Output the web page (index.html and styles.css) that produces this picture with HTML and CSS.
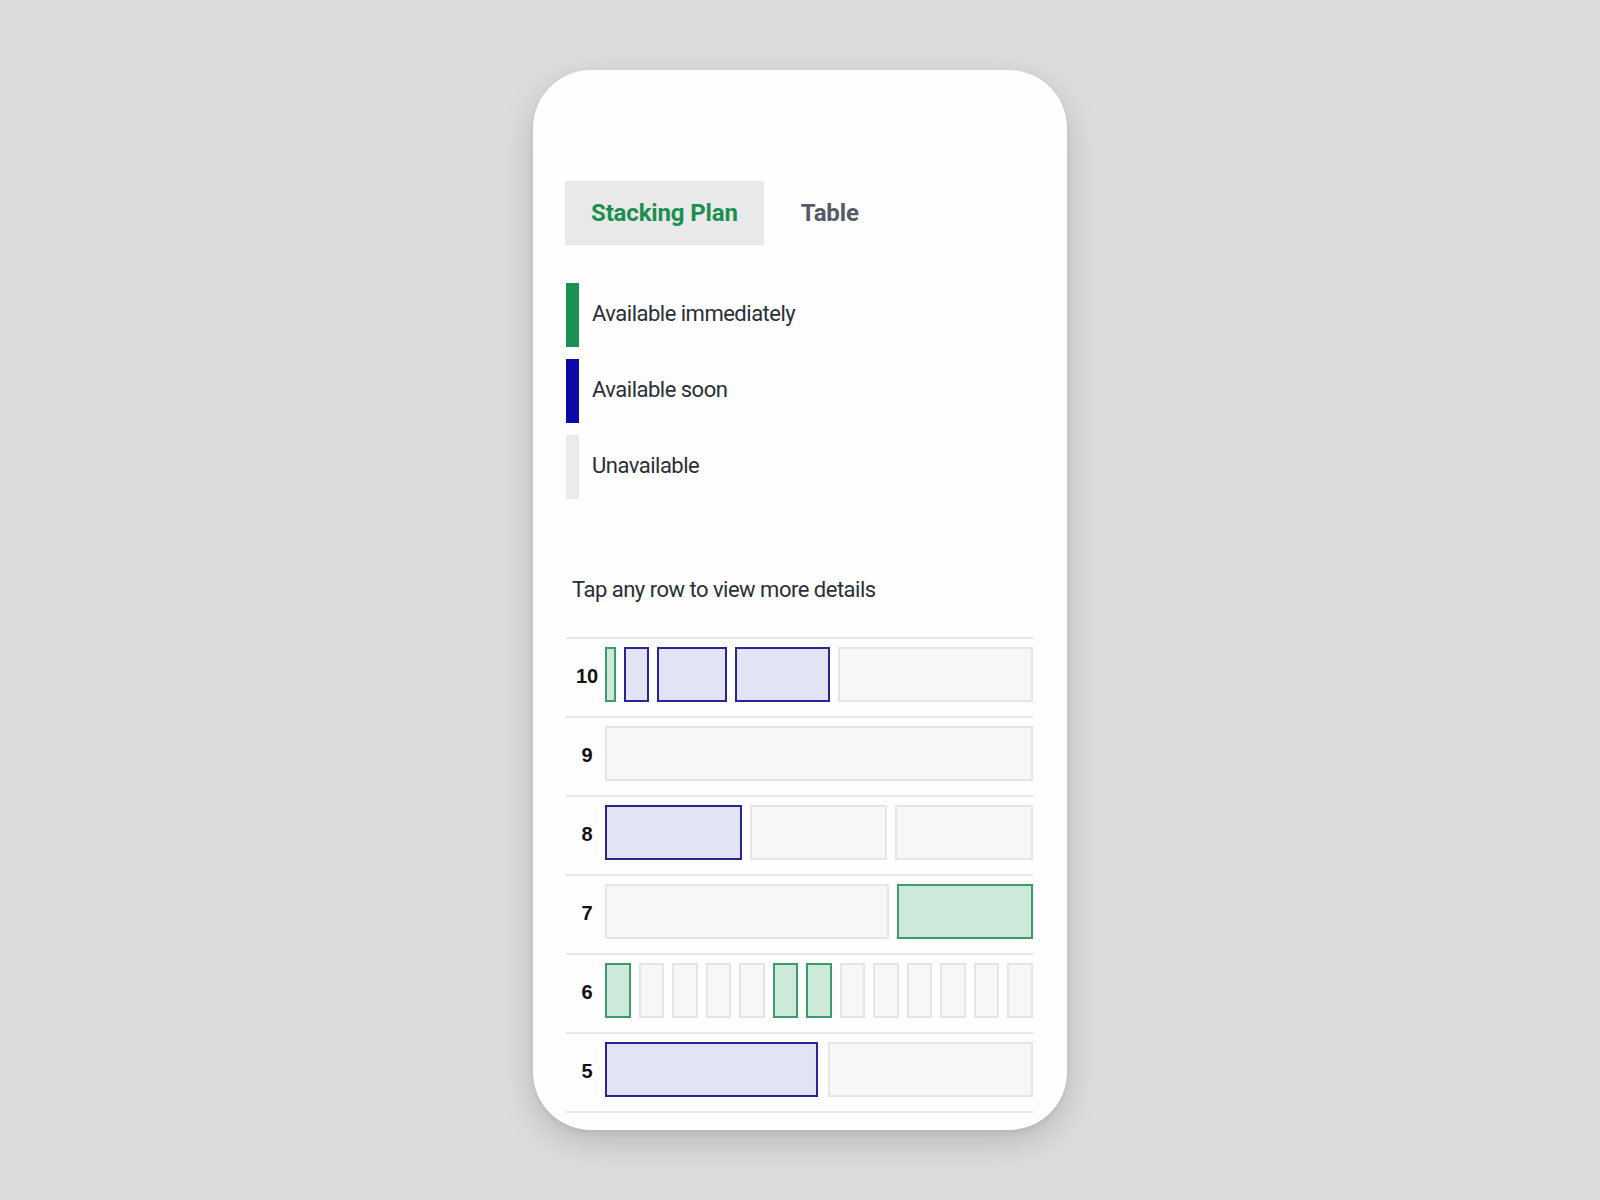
FILE: index.html
```html
<!DOCTYPE html>
<html lang="en">
<head>
<meta charset="utf-8">
<title>Stacking Plan</title>
<link rel="stylesheet" href="styles.css">
</head>
<body>
<div class="stage">
  <div class="phone">
    <div class="tabs">
      <div class="tab tab-active">Stacking Plan</div>
      <div class="tab">Table</div>
    </div>
    <ul class="legend">
      <li class="legend-item"><span class="swatch swatch-now"></span><span class="legend-text">Available immediately</span></li>
      <li class="legend-item"><span class="swatch swatch-soon"></span><span class="legend-text">Available soon</span></li>
      <li class="legend-item"><span class="swatch swatch-none"></span><span class="legend-text">Unavailable</span></li>
    </ul>
    <p class="hint">Tap any row to view more details</p>
    <div class="floors">
      <div class="floor">
        <div class="floor-num">10</div>
        <div class="units">
          <div class="unit now" style="flex-grow:7"></div>
          <div class="unit soon" style="flex-grow:21"></div>
          <div class="unit soon" style="flex-grow:66"></div>
          <div class="unit soon" style="flex-grow:91"></div>
          <div class="unit none" style="flex-grow:191"></div>
        </div>
      </div>
      <div class="floor">
        <div class="floor-num">9</div>
        <div class="units">
          <div class="unit none" style="flex-grow:1"></div>
        </div>
      </div>
      <div class="floor">
        <div class="floor-num">8</div>
        <div class="units">
          <div class="unit soon" style="flex-grow:133"></div>
          <div class="unit none" style="flex-grow:132"></div>
          <div class="unit none" style="flex-grow:134"></div>
        </div>
      </div>
      <div class="floor">
        <div class="floor-num">7</div>
        <div class="units">
          <div class="unit none" style="flex-grow:279"></div>
          <div class="unit now" style="flex-grow:132"></div>
        </div>
      </div>
      <div class="floor">
        <div class="floor-num">6</div>
        <div class="units">
          <div class="unit now" style="flex-grow:1"></div>
          <div class="unit none" style="flex-grow:1"></div>
          <div class="unit none" style="flex-grow:1"></div>
          <div class="unit none" style="flex-grow:1"></div>
          <div class="unit none" style="flex-grow:1"></div>
          <div class="unit now" style="flex-grow:1"></div>
          <div class="unit now" style="flex-grow:1"></div>
          <div class="unit none" style="flex-grow:1"></div>
          <div class="unit none" style="flex-grow:1"></div>
          <div class="unit none" style="flex-grow:1"></div>
          <div class="unit none" style="flex-grow:1"></div>
          <div class="unit none" style="flex-grow:1"></div>
          <div class="unit none" style="flex-grow:1"></div>
        </div>
      </div>
      <div class="floor">
        <div class="floor-num">5</div>
        <div class="units units-wide">
          <div class="unit soon" style="flex-grow:208"></div>
          <div class="unit none" style="flex-grow:201"></div>
        </div>
      </div>
    </div>
  </div>
</div>
</body>
</html>
```

FILE: styles.css
```css
* { box-sizing: border-box; }

html, body {
  margin: 0;
  padding: 0;
  width: 1600px;
  height: 1200px;
  background: #dcdcdb;
  font-family: Roboto, "Liberation Sans", sans-serif;
  overflow: hidden;
}

.stage {
  padding: 70px 0 0 533px;
}

.phone {
  width: 534px;
  height: 1060px;
  background: #fdfefd;
  border-radius: 58px;
  box-shadow: 0 12px 32px rgba(0, 0, 0, 0.16), 0 2px 6px rgba(0, 0, 0, 0.06);
  padding: 111px 34px 0 33px;
  overflow: hidden;
}

.tabs {
  display: flex;
  gap: 11px;
  margin-left: -1px;
}

.tab {
  height: 64px;
  display: flex;
  align-items: center;
  padding: 0 26px;
  font-size: 24px;
  font-weight: 700;
  letter-spacing: -0.15px;
  color: #565a66;
}

.tab-active {
  background: #e8e9e8;
  color: #1b8f52;
}

.legend {
  list-style: none;
  margin: 38px 0 0;
  padding: 0;
  display: flex;
  flex-direction: column;
  gap: 12px;
}

.legend-item {
  display: flex;
  align-items: center;
  gap: 13px;
  height: 64px;
}

.swatch {
  width: 13px;
  height: 64px;
  flex: none;
}

.swatch-now { background: #1a9152; }
.swatch-soon { background: #0b0aa8; }
.swatch-none { background: #ebebea; }

.legend-text {
  font-size: 22px;
  letter-spacing: -0.5px;
  color: #2b2e36;
  margin-top: -4px;
}

.hint {
  margin: 76px 0 0 6px;
  font-size: 22px;
  line-height: 30px;
  letter-spacing: -0.5px;
  color: #2b2e36;
}

.floors {
  margin-top: 32px;
  border-bottom: 2px solid #e7e8e7;
}

.floor {
  display: flex;
  align-items: center;
  border-top: 2px solid #e7e8e7;
  padding: 8px 0 14px;
}

.floor-num {
  width: 39px;
  padding-left: 3px;
  padding-top: 3px;
  text-align: center;
  font-family: "Liberation Sans", Arial, sans-serif;
  font-weight: 700;
  font-size: 20px;
  color: #111;
  flex: none;
}

.units {
  flex: 1;
  display: flex;
  gap: 8px;
  height: 55px;
}

.units-wide { gap: 10px; }

.unit {
  flex-basis: 0;
  min-width: 0;
  height: 55px;
  border: 2px solid #e4e5e4;
  background: #f6f7f6;
}

.unit.now {
  background: #cde9d9;
  border-color: #3f9a6b;
}

.unit.soon {
  background: #e3e3f6;
  border-color: #2b2594;
}

.unit.none {
  background: #f6f7f6;
  border-color: #e4e5e4;
}
```
